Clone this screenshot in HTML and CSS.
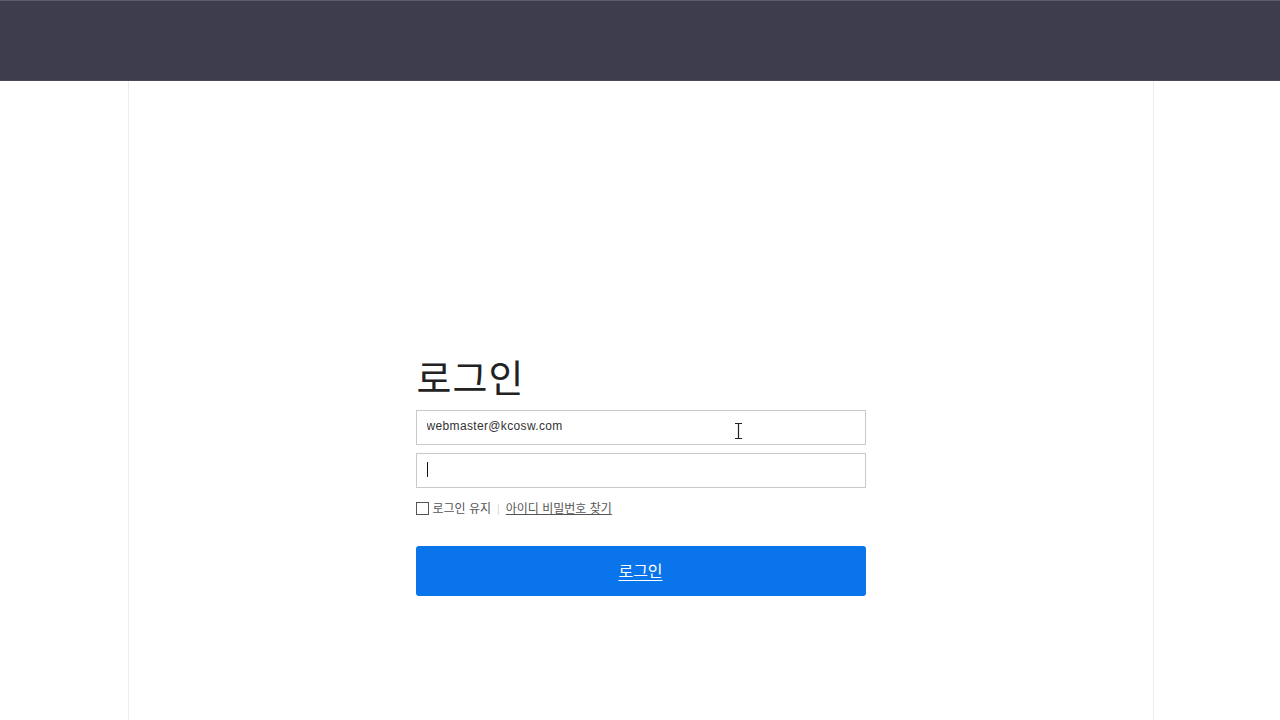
FILE: index.html
```html
<!DOCTYPE html>
<html lang="ko">
<head>
<meta charset="utf-8">
<title>로그인</title>
<link rel="stylesheet" href="styles.css">
</head>
<body>
<header class="topbar"></header>
<main class="page">
  <section class="login">
    <h1 class="login-title">로그인</h1>
    <form class="login-form">
      <div class="field">
        <input class="input" type="text" value="webmaster@kcosw.com" readonly>
        <svg class="ibeam" width="9" height="16" viewBox="0 0 9 16"><path d="M1 0.5h7M1 15.5h7M4.5 0.5v15" stroke="#222" stroke-width="1.2" fill="none"/></svg>
      </div>
      <div class="field">
        <input class="input" type="password" value="" readonly>
        <span class="caret"></span>
      </div>
      <div class="options">
        <label class="keep"><span class="checkbox"></span>로그인 유지</label>
        <span class="sep">|</span>
        <a class="find" href="#">아이디 비밀번호 찾기</a>
      </div>
      <a class="submit" href="#">로그인</a>
    </form>
  </section>
</main>
</body>
</html>
```
FILE: styles.css
```css
* { box-sizing: border-box; }
html, body { margin: 0; padding: 0; background: #fff; }
body {
  font-family: "Noto Sans CJK KR", "Noto Sans", sans-serif;
  color: #222;
  height: 720px;
  overflow: hidden;
}
.topbar {
  height: 81px;
  background: #3e3d4d;
  border-top: 1px solid #5d5c6b;
  border-bottom: 1px solid #4a495a;
}
.page {
  width: 1026px;
  margin: 0 0 0 128px;
  height: 640px;
  border-left: 1px solid #ececec;
  border-right: 1px solid #ececec;
  display: flex;
  justify-content: center;
}
.login {
  width: 450px;
  padding-top: 273px;
  margin-right: 1px;
}
.login-title {
  margin: 0 0 12px 1px;
  font-size: 38px;
  font-weight: 400;
  line-height: 44px;
  color: #222;
  letter-spacing: 1px;
}
.login-form { display: flex; flex-direction: column; }
.field { position: relative; margin-bottom: 8px; }
.input {
  display: block;
  width: 100%;
  height: 35px;
  border: 1px solid #c9c9c9;
  padding: 0 10px 3px;
  font-family: "Liberation Sans", Arial, sans-serif;
  font-size: 12px;
  letter-spacing: 0.35px;
  color: #333;
  background: #fff;
  outline: none;
}
.ibeam { position: absolute; left: 318px; top: 13px; }
.caret {
  position: absolute;
  left: 11px;
  top: 9px;
  width: 1px;
  height: 15px;
  background: #111;
}
.options {
  display: flex;
  align-items: center;
  margin-top: 1px;
  height: 20px;
  font-size: 12px;
  color: #555;
}
.keep { display: flex; align-items: center; }
.checkbox {
  width: 13px;
  height: 13px;
  border: 1px solid #555;
  background: #fff;
  margin-right: 4px;
  margin-top: 2px;
}
.sep { color: #ccc; margin: 0 6px; font-size: 10px; }
.find { color: #555; text-decoration: underline; }
.submit {
  margin-top: 29px;
  height: 50px;
  display: flex;
  align-items: center;
  justify-content: center;
  background: #0a74ea;
  border-radius: 3px;
  color: #fff;
  font-size: 16px;
  text-decoration: underline;
  text-underline-offset: 3px;
  padding-bottom: 3px;
}
```
